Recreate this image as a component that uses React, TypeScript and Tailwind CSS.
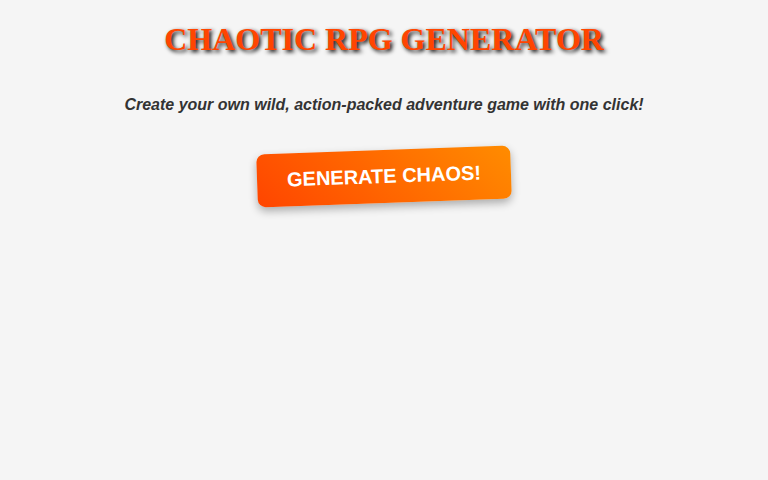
import React from 'react';

export default function App() {
  return (
    <main className="min-h-screen bg-[#f5f5f5] p-5 text-center font-['Liberation_Sans',Arial,sans-serif] text-[#333333]">
      <h1 className="mb-[31px] font-['Liberation_Serif','Times_New_Roman',serif] text-[32px] leading-[39px] font-bold text-[#ff4500] uppercase [text-shadow:2px_2px_4px_#000000]">
        Chaotic RPG Generator
      </h1>
      <p className="mb-[31px] text-base leading-[29px] font-bold italic">
        Create your own wild, action-packed adventure game with one click!
      </p>
      <button
        type="button"
        className="-rotate-2 cursor-pointer rounded-lg bg-linear-[45deg,#ff4500,#ff8c00] px-[30px] py-[15px] text-xl leading-[23px] font-bold text-white uppercase shadow-[0_4px_8px_rgba(0,0,0,0.3)]"
      >
        Generate Chaos!
      </button>
    </main>
  );
}
